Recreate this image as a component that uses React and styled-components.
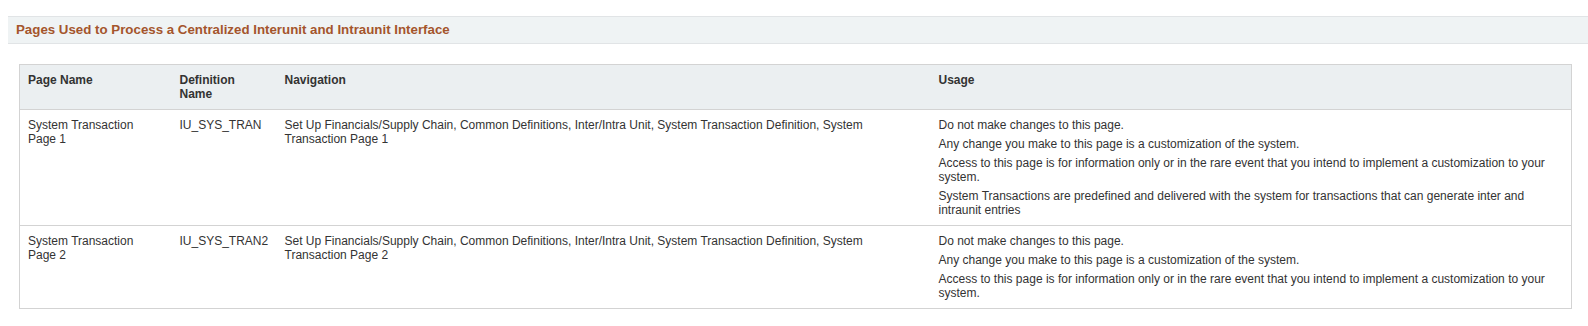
import React from "react";
import styled, { createGlobalStyle } from "styled-components";

const Global = createGlobalStyle`
  html, body { margin: 0; padding: 0; background: #fff; }
  body { font-family: "Liberation Sans", Arial, sans-serif; color: #333; overflow: hidden; }
`;

const Page = styled.div`
  padding: 16px 0 0 8px;
`;

const TitleBar = styled.div`
  background: #eff3f4;
  border-top: 1px solid #e1e4e6;
  border-bottom: 1px solid #e1e4e6;
  height: 26px;
  display: flex;
  align-items: center;
  padding-left: 8px;
`;

const Title = styled.h2`
  margin: 0;
  font-size: 13.3px;
  font-weight: bold;
  color: #a4552c;
  line-height: 16px;
`;

const TableWrap = styled.div`
  margin: 20px 16px 0 11px;
`;

const Table = styled.table`
  width: 100%;
  border-collapse: collapse;
  border: 1px solid #d3d3d3;
  table-layout: fixed;
  font-size: 12px;
  line-height: 14px;
`;

const Th = styled.th`
  background: #ebeff1;
  text-align: left;
  vertical-align: top;
  font-weight: bold;
  padding: 8px 8px 8px;
  color: #333;
  border-bottom: 1px solid #d3d3d3;
`;

const Td = styled.td`
  text-align: left;
  vertical-align: top;
  padding: 8px 8px 8px;
  color: #333;
  border-bottom: 1px solid #d3d3d3;
`;

const Para = styled.p`
  margin: 0 0 5px;
  &:last-child { margin-bottom: 0; }
`;

const rows = [
  {
    page: "System Transaction Page 1",
    def: "IU_SYS_TRAN",
    nav: "Set Up Financials/Supply Chain, Common Definitions, Inter/Intra Unit, System Transaction Definition, System Transaction Page 1",
    usage: [
      "Do not make changes to this page.",
      "Any change you make to this page is a customization of the system.",
      "Access to this page is for information only or in the rare event that you intend to implement a customization to your system.",
      "System Transactions are predefined and delivered with the system for transactions that can generate inter and intraunit entries",
    ],
  },
  {
    page: "System Transaction Page 2",
    def: "IU_SYS_TRAN2",
    nav: "Set Up Financials/Supply Chain, Common Definitions, Inter/Intra Unit, System Transaction Definition, System Transaction Page 2",
    usage: [
      "Do not make changes to this page.",
      "Any change you make to this page is a customization of the system.",
      "Access to this page is for information only or in the rare event that you intend to implement a customization to your system.",
    ],
  },
];

export default function App() {
  return (
    <Page>
      <Global />
      <TitleBar>
        <Title>Pages Used to Process a Centralized Interunit and Intraunit Interface</Title>
      </TitleBar>
      <TableWrap>
        <Table>
          <colgroup>
            <col style={{ width: 152 }} />
            <col style={{ width: 105 }} />
            <col style={{ width: 654 }} />
            <col />
          </colgroup>
          <thead>
            <tr>
              <Th>Page Name</Th>
              <Th>Definition Name</Th>
              <Th>Navigation</Th>
              <Th>Usage</Th>
            </tr>
          </thead>
          <tbody>
            {rows.map((r) => (
              <tr key={r.def}>
                <Td>{r.page}</Td>
                <Td>{r.def}</Td>
                <Td>{r.nav}</Td>
                <Td>
                  {r.usage.map((u, i) => (
                    <Para key={i}>{u}</Para>
                  ))}
                </Td>
              </tr>
            ))}
          </tbody>
        </Table>
      </TableWrap>
    </Page>
  );
}
